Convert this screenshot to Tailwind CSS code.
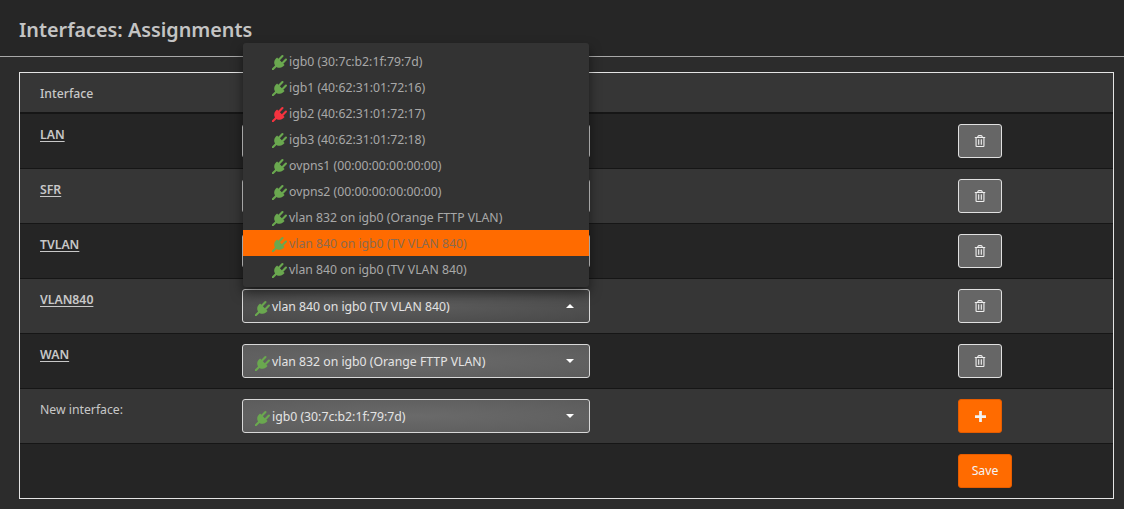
<!DOCTYPE html>
<html lang="en">
<head>
  <meta charset="UTF-8">
  <title>Interfaces: Assignments</title>
  <script src="https://cdn.jsdelivr.net/npm/@tailwindcss/browser@4"></script>
  <meta name="viewport" content="width=device-width, initial-scale=1.0">
</head>
<body class="relative h-[509px] w-[1124px] overflow-hidden bg-[#2c2c2c] font-['Noto_Sans',sans-serif] text-[12.25px] text-[#c8c8c8]">

  <svg class="hidden">
    <symbol id="plug" viewBox="0 0 1792 1792"><path d="M1755 453q37 38 37 90.5t-37 90.5l-401 400 150 150-160 160q-163 163-389.5 186.5t-411.5-100.5l-362 362h-181v-181l362-362q-124-185-100.5-411.5t186.5-389.5l160-160 150 150 400-401q38-37 91-37t90 37 37 90.5-37 90.5l-400 401 234 234 401-400q38-37 91-37t90 37z"/></symbol>
    <symbol id="trash" viewBox="0 0 448 512"><path d="M268 416h24a12 12 0 0 0 12-12V188a12 12 0 0 0-12-12h-24a12 12 0 0 0-12 12v216a12 12 0 0 0 12 12zM432 80h-82.41l-34-56.7A48 48 0 0 0 274.41 0H173.59a48 48 0 0 0-41.16 23.3L98.41 80H16A16 16 0 0 0 0 96v16a16 16 0 0 0 16 16h16v336a48 48 0 0 0 48 48h288a48 48 0 0 0 48-48V128h16a16 16 0 0 0 16-16V96a16 16 0 0 0-16-16zM171.84 50.91A6 6 0 0 1 177 48h94a6 6 0 0 1 5.15 2.91L293.61 80H154.39zM368 464H80V128h288zm-212-48h24a12 12 0 0 0 12-12V188a12 12 0 0 0-12-12h-24a12 12 0 0 0-12 12v216a12 12 0 0 0 12 12z"/></symbol>
  </svg>

  <header class="h-[57px] border-b border-[#a8a8a8] bg-[#262626] pl-[19px] pt-[14px]">
    <h1 class="text-[19.8px] leading-[32px] font-semibold text-[#c4c4c4]">Interfaces: Assignments</h1>
  </header>

  <main class="ml-[19px] mr-[10px] mt-[15px] h-[427px] border border-[#e4e4e4] bg-[#252525]">
    <div class="flex h-[41px] items-center border-b-2 border-[#161616] bg-[#363636] pl-5 pt-[3px] font-medium">Interface</div>

    <div class="grid h-[55px] grid-cols-[202px_348px_368px_auto] border-b border-[#161616] bg-[#252525] pt-[10px] pl-5">
      <a class="leading-[22px] font-semibold underline underline-offset-2" href="#">LAN</a>
      <div class="h-[34px] rounded-[3px] border border-[#d8d8d8] bg-[#5f5f5f]"></div>
      <div class="col-start-4">
        <button class="flex h-[34px] w-[44px] items-center justify-center rounded-[3px] border border-[#e0e0e0] bg-[#666]"><svg class="size-[12px] fill-[#eee]"><use href="#trash"/></svg></button>
      </div>
    </div>

    <div class="grid h-[55px] grid-cols-[202px_348px_368px_auto] border-b border-[#161616] bg-[#363636] pt-[10px] pl-5">
      <a class="leading-[22px] font-semibold underline underline-offset-2" href="#">SFR</a>
      <div class="h-[34px] rounded-[3px] border border-[#d8d8d8] bg-[#5f5f5f]"></div>
      <div class="col-start-4">
        <button class="flex h-[34px] w-[44px] items-center justify-center rounded-[3px] border border-[#e0e0e0] bg-[#666]"><svg class="size-[12px] fill-[#eee]"><use href="#trash"/></svg></button>
      </div>
    </div>

    <div class="grid h-[55px] grid-cols-[202px_348px_368px_auto] border-b border-[#161616] bg-[#252525] pt-[10px] pl-5">
      <a class="leading-[22px] font-semibold underline underline-offset-2" href="#">TVLAN</a>
      <div class="h-[34px] rounded-[3px] border border-[#d8d8d8] bg-[#5f5f5f]"></div>
      <div class="col-start-4">
        <button class="flex h-[34px] w-[44px] items-center justify-center rounded-[3px] border border-[#e0e0e0] bg-[#666]"><svg class="size-[12px] fill-[#eee]"><use href="#trash"/></svg></button>
      </div>
    </div>

    <div class="grid h-[55px] grid-cols-[202px_348px_368px_auto] border-b border-[#161616] bg-[#363636] pt-[10px] pl-5">
      <a class="leading-[22px] font-semibold underline underline-offset-2" href="#">VLAN840</a>
      <div class="flex h-[34px] items-center rounded-[3px] border border-[#d8d8d8] bg-[radial-gradient(ellipse_at_center,#5c5c5c,#484848)] pl-[12px] pr-[15px] text-[#e4e4e4]">
        <svg class="mt-[4px] mr-[2px] size-[15px] fill-[#6aa84f]"><use href="#plug"/></svg>
        <span class="flex-1 pt-[2px]">vlan 840 on igb0 (TV VLAN 840)</span>
        <span class="size-0 border-x-[4px] border-b-[4px] border-x-transparent border-b-white"></span>
      </div>
      <div class="col-start-4">
        <button class="flex h-[34px] w-[44px] items-center justify-center rounded-[3px] border border-[#e0e0e0] bg-[#666]"><svg class="size-[12px] fill-[#eee]"><use href="#trash"/></svg></button>
      </div>
    </div>

    <div class="grid h-[55px] grid-cols-[202px_348px_368px_auto] border-b border-[#161616] bg-[#252525] pt-[10px] pl-5">
      <a class="leading-[22px] font-semibold underline underline-offset-2" href="#">WAN</a>
      <div class="flex h-[34px] items-center rounded-[3px] border border-[#d8d8d8] bg-[radial-gradient(ellipse_at_center,#6a6a6a,#5c5c5c)] pl-[12px] pr-[15px] text-[#e4e4e4]">
        <svg class="mt-[4px] mr-[2px] size-[15px] fill-[#6aa84f]"><use href="#plug"/></svg>
        <span class="flex-1 pt-[2px]">vlan 832 on igb0 (Orange FTTP VLAN)</span>
        <span class="size-0 border-x-[4px] border-t-[4px] border-x-transparent border-t-white"></span>
      </div>
      <div class="col-start-4">
        <button class="flex h-[34px] w-[44px] items-center justify-center rounded-[3px] border border-[#e0e0e0] bg-[#666]"><svg class="size-[12px] fill-[#eee]"><use href="#trash"/></svg></button>
      </div>
    </div>

    <div class="grid h-[55px] grid-cols-[202px_348px_368px_auto] border-b border-[#161616] bg-[#363636] pt-[10px] pl-5">
      <span class="leading-[22px]">New interface:</span>
      <div class="flex h-[34px] items-center rounded-[3px] border border-[#d8d8d8] bg-[radial-gradient(ellipse_at_center,#6a6a6a,#5c5c5c)] pl-[12px] pr-[15px] text-[#e4e4e4]">
        <svg class="mt-[4px] mr-[2px] size-[15px] fill-[#6aa84f]"><use href="#plug"/></svg>
        <span class="flex-1 pt-[2px]">igb0 (30:7c:b2:1f:79:7d)</span>
        <span class="size-0 border-x-[4px] border-t-[4px] border-x-transparent border-t-white"></span>
      </div>
      <div class="col-start-4">
        <button class="flex h-[34px] w-[44px] items-center justify-center rounded-[3px] border border-[#e65c00] bg-[#ff6b00]"><svg class="size-[11px] fill-[#f2f2f2]" viewBox="0 0 12 12"><path d="M4.5 0h3v4.5H12v3H7.5V12h-3V7.5H0v-3h4.5z"/></svg></button>
      </div>
    </div>

    <div class="grid h-[53px] grid-cols-[202px_348px_368px_auto] pt-[10px] pl-5">
      <div class="col-start-4">
        <button class="h-[34px] w-[54px] rounded-[3px] border border-[#e65c00] bg-[#ff6b00] text-[#f4f4f4]">Save</button>
      </div>
    </div>
  </main>

  <!-- open select menu -->
  <div class="absolute top-[43px] left-[243px] w-[346px] rounded-[3px] bg-[#333] py-[5px] text-[#a8a8a8] shadow-[0_6px_12px_rgba(0,0,0,0.5)]">
    <div class="flex h-[26px] items-center pl-[29px]"><svg class="mt-[2px] mr-[2px] size-[15px] fill-[#6aa84f]"><use href="#plug"/></svg><span class="pt-[2px]">igb0 (30:7c:b2:1f:79:7d)</span></div>
    <div class="flex h-[26px] items-center pl-[29px]"><svg class="mt-[2px] mr-[2px] size-[15px] fill-[#6aa84f]"><use href="#plug"/></svg><span class="pt-[2px]">igb1 (40:62:31:01:72:16)</span></div>
    <div class="flex h-[26px] items-center pl-[29px]"><svg class="mt-[2px] mr-[2px] size-[15px] fill-[#f5333f]"><use href="#plug"/></svg><span class="pt-[2px]">igb2 (40:62:31:01:72:17)</span></div>
    <div class="flex h-[26px] items-center pl-[29px]"><svg class="mt-[2px] mr-[2px] size-[15px] fill-[#6aa84f]"><use href="#plug"/></svg><span class="pt-[2px]">igb3 (40:62:31:01:72:18)</span></div>
    <div class="flex h-[26px] items-center pl-[29px]"><svg class="mt-[2px] mr-[2px] size-[15px] fill-[#6aa84f]"><use href="#plug"/></svg><span class="pt-[2px]">ovpns1 (00:00:00:00:00:00)</span></div>
    <div class="flex h-[26px] items-center pl-[29px]"><svg class="mt-[2px] mr-[2px] size-[15px] fill-[#6aa84f]"><use href="#plug"/></svg><span class="pt-[2px]">ovpns2 (00:00:00:00:00:00)</span></div>
    <div class="flex h-[26px] items-center pl-[29px]"><svg class="mt-[2px] mr-[2px] size-[15px] fill-[#6aa84f]"><use href="#plug"/></svg><span class="pt-[2px]">vlan 832 on igb0 (Orange FTTP VLAN)</span></div>
    <div class="flex h-[26px] items-center bg-[#ff6b00] pl-[29px] text-[#8a6a50]"><svg class="mt-[2px] mr-[2px] size-[15px] fill-[#6aa84f]"><use href="#plug"/></svg><span class="pt-[2px]">vlan 840 on igb0 (TV VLAN 840)</span></div>
    <div class="flex h-[26px] items-center pl-[29px]"><svg class="mt-[2px] mr-[2px] size-[15px] fill-[#6aa84f]"><use href="#plug"/></svg><span class="pt-[2px]">vlan 840 on igb0 (TV VLAN 840)</span></div>
  </div>

</body>
</html>
